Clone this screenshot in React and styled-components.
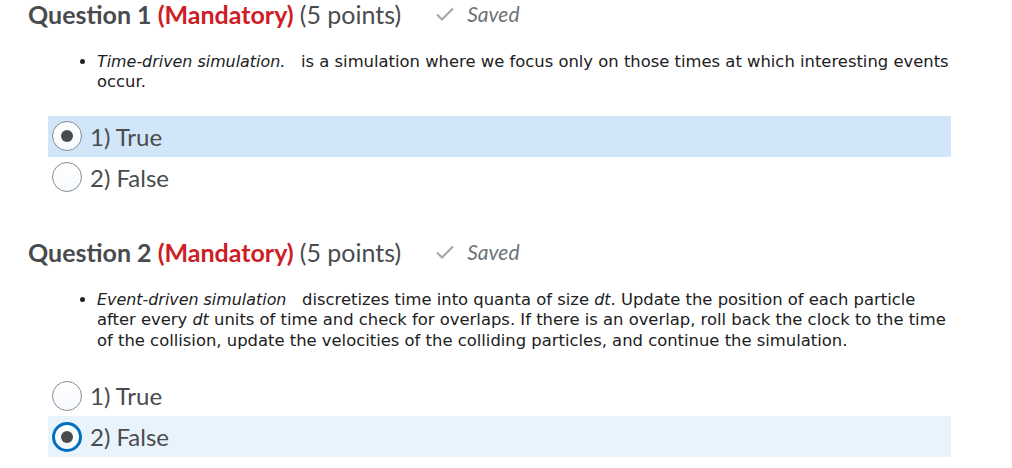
import React from "react";
import styled, { createGlobalStyle } from "styled-components";

const Global = createGlobalStyle`
  html, body { margin: 0; padding: 0; background: #fff; }
  body { font-family: "DejaVu Sans", Verdana, sans-serif; }
`;

const Page = styled.div`
  width: 1012px;
  height: 468px;
  overflow: hidden;
  padding-left: 28px;
  box-sizing: border-box;
`;

const Question = styled.section`
  margin-bottom: ${(p) => p.$gap || 0}px;
`;

const Heading = styled.h2`
  margin: 0;
  display: flex;
  align-items: center;
  font-family: Lato, "Open Sans", sans-serif;
  font-size: 25px;
  line-height: 28px;
  color: #494c4e;
  font-weight: 700;
`;

const Mandatory = styled.span`
  color: #cd2026;
  margin-left: 6px;
`;

const Points = styled.span`
  font-weight: 400;
  margin-left: 6px;
`;

const Saved = styled.span`
  display: inline-flex;
  align-items: center;
  margin-left: 34px;
  font-size: 21px;
  font-style: italic;
  font-weight: 400;
  color: #6e7376;
  gap: 12px;
`;

const Body = styled.ul`
  margin: 24px 0 ${(p) => p.$after || 24}px;
  padding-left: 69px;
  padding-right: 60px;
  font-size: 16.4px;
  line-height: 20.4px;
  color: #202122;
  list-style: disc;
`;

const Em = styled.em`
  font-size: 15.9px;
`;

const Options = styled.div`
  margin-left: 20px;
  width: 903px;
`;

const Row = styled.label`
  display: flex;
  align-items: center;
  height: 41px;
  padding-left: 4px;
  gap: 8px;
  background: ${(p) => p.$bg || "transparent"};
  font-family: Lato, "Open Sans", sans-serif;
  font-size: 24px;
  color: #494c4e;
`;

const Radio = styled.span`
  box-sizing: border-box;
  width: 30px;
  height: 30px;
  border-radius: 50%;
  background: linear-gradient(#fff, #f6f9fd);
  border: ${(p) => (p.$focus ? "3px solid #006fbf" : "1px solid #868c8f")};
  display: flex;
  align-items: center;
  justify-content: center;
  flex: none;
  &::after {
    content: "";
    display: ${(p) => (p.$checked ? "block" : "none")};
    width: 12px;
    height: 12px;
    border-radius: 50%;
    background: #494c4e;
  }
`;

const Check = () => (
  <svg width="20" height="16" viewBox="0 0 20 16">
    <polyline points="2,8.5 7,13.5 18,2.5" fill="none" stroke="#a5a9ab" strokeWidth="2.2" />
  </svg>
);

const Header = ({ n }) => (
  <Heading>
    Question {n}
    <Mandatory>(Mandatory)</Mandatory>
    <Points>(5 points)</Points>
    <Saved>
      <Check />
      Saved
    </Saved>
  </Heading>
);

const Option = ({ label, checked, focus, bg }) => (
  <Row $bg={bg}>
    <Radio $checked={checked} $focus={focus} />
    {label}
  </Row>
);

export default function App() {
  return (
    <Page>
      <Global />
      <Question $gap={40}>
        <Header n={1} />
        <Body $after={23}>
          <li>
            <Em>Time-driven simulation.</Em>&nbsp;&nbsp; is a simulation where we focus only on those times at
            which interesting events occur.
          </li>
        </Body>
        <Options>
          <Option label="1) True" checked bg="#d1e6f9" />
          <Option label="2) False" />
        </Options>
      </Question>
      <Question>
        <Header n={2} />
        <Body $after={24}>
          <li>
            <Em>Event-driven simulation</Em>&nbsp;&nbsp; discretizes time into quanta of size <Em>dt</Em>. Update the
            position of each particle after every <Em>dt</Em> units of time and check for overlaps. If there is an
            overlap, roll back the clock to the time of the collision, update the velocities of the colliding
            particles, and continue the simulation.
          </li>
        </Body>
        <Options>
          <Option label="1) True" />
          <Option label="2) False" checked focus bg="#e9f3fc" />
        </Options>
      </Question>
    </Page>
  );
}
